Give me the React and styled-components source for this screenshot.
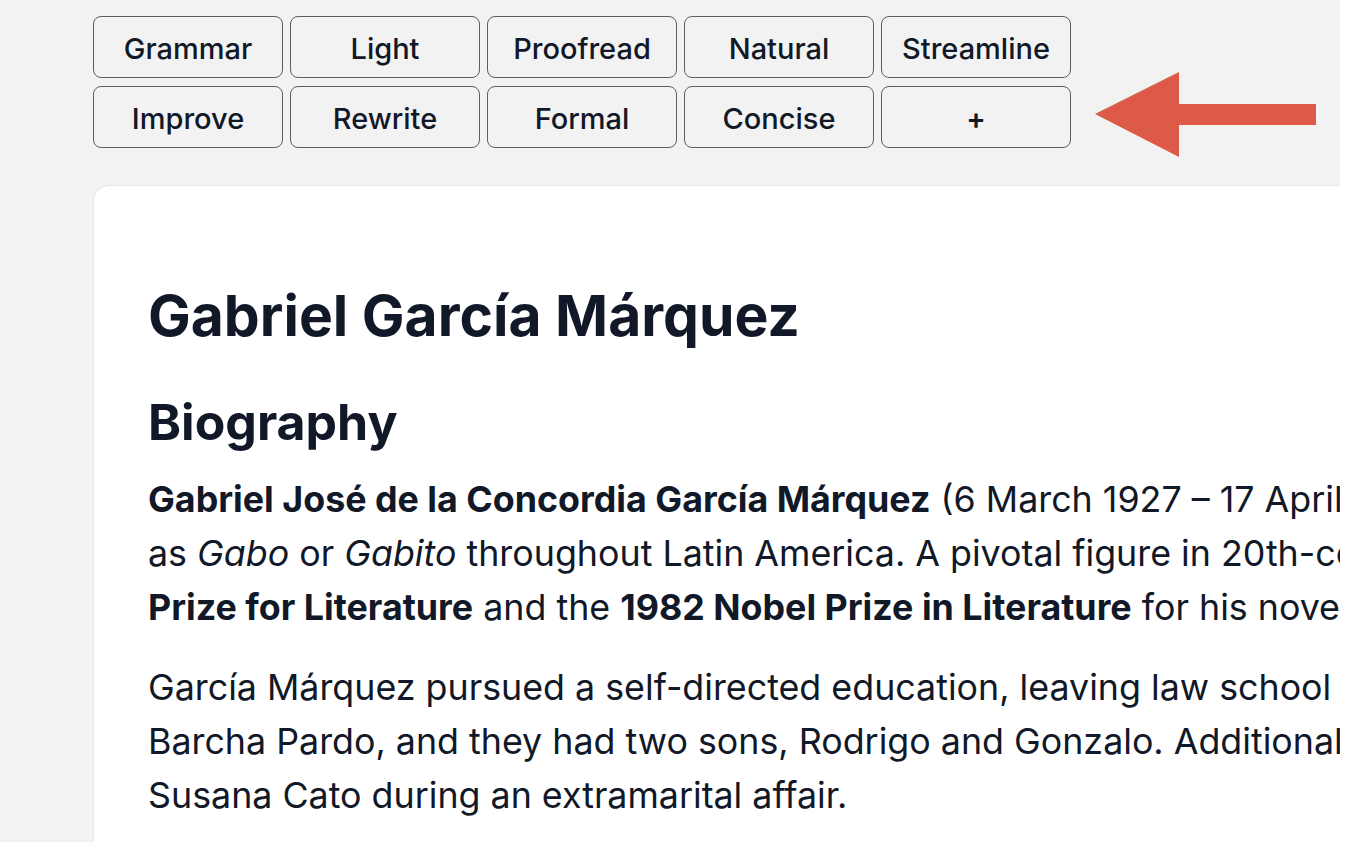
import React from 'react';
import styled, { createGlobalStyle } from 'styled-components';

const GlobalStyle = createGlobalStyle`
  body {
    margin: 0;
    background: #ffffff;
    font-family: Inter, "Noto Sans", sans-serif;
    color: #111827;
  }
`;

// the visible frame; the right 16px of the window stays white
const Frame = styled.div`
  width: 1340px;
  height: 842px;
  overflow: hidden;
  background: #f2f2f2;
  padding: 16px 0 0 93px;
  box-sizing: border-box;
`;

const Header = styled.div`
  position: relative;
  width: 1000px;
`;

const ButtonGrid = styled.div`
  display: grid;
  grid-template-columns: repeat(5, 190px);
  grid-auto-rows: 62px;
  gap: 8px 7px;
`;

const ActionButton = styled.button`
  box-sizing: border-box;
  margin: 0;
  padding: 2px 0 0;
  background: #f2f2f2;
  border: 1px solid #5e5e5e;
  border-radius: 8px;
  font-family: Inter, sans-serif;
  font-size: 29px;
  font-weight: ${(p) => (p.$plus ? 600 : 500)};
  color: #111827;
  cursor: pointer;
`;

const Arrow = styled.svg`
  position: absolute;
  left: 1002px;
  top: 56px;
`;

const Card = styled.article`
  margin-top: 37px;
  width: 1700px;
  min-height: 900px;
  background: #ffffff;
  border: 1px solid #e2e8f0;
  border-radius: 16px;
  padding: 96px 54px 0;
  box-sizing: border-box;
`;

const Title = styled.h1`
  margin: 0;
  font-size: 57px;
  line-height: 1.2;
  font-weight: 700;
`;

const Subtitle = styled.h2`
  margin: 42px 0 0;
  font-size: 50px;
  line-height: 1.2;
  font-weight: 700;
`;

const Para = styled.p`
  margin: ${(p) => (p.$first ? '20px' : '26px')} 0 0;
  font-size: 35.8px;
  line-height: 54px;
  white-space: nowrap;
  font-weight: 400;

  strong {
    font-weight: 700;
  }
`;

const buttons = [
  'Grammar', 'Light', 'Proofread', 'Natural', 'Streamline',
  'Improve', 'Rewrite', 'Formal', 'Concise', '+',
];

export default function App() {
  return (
    <>
      <GlobalStyle />
      <Frame>
        <Header>
          <ButtonGrid>
            {buttons.map((b) => (
              <ActionButton key={b} $plus={b === '+'}>{b}</ActionButton>
            ))}
          </ButtonGrid>
          <Arrow width="224" height="86" viewBox="0 0 224 86">
            <polygon points="0,42 84,0 84,32 221,32 221,53 84,53 84,85" fill="#dc5a47" />
          </Arrow>
        </Header>

        <Card>
          <Title>Gabriel García Márquez</Title>
          <Subtitle>Biography</Subtitle>
          <Para $first>
            <strong>Gabriel José de la Concordia García Márquez</strong> (6 March 1927 – 17 April 2014) was a Colombian novelist, short-story writer, screenwriter, and journalist, known affectionately
            <br />
            as <em>Gabo</em> or <em>Gabito</em> throughout Latin America. A pivotal figure in 20th-century literature, he received the <strong>1972 Neustadt International</strong>
            <br />
            <strong>Prize for Literature</strong> and the <strong>1982 Nobel Prize in Literature</strong> for his novels and short stories.
          </Para>
          <Para>
            García Márquez pursued a self-directed education, leaving law school for a career in journalism. In 1958 he married Mercedes
            <br />
            Barcha Pardo, and they had two sons, Rodrigo and Gonzalo. Additionally, he had a daughter, Indira, with
            <br />
            Susana Cato during an extramarital affair.
          </Para>
        </Card>
      </Frame>
    </>
  );
}
